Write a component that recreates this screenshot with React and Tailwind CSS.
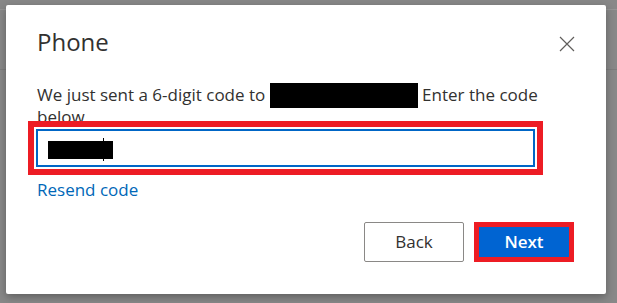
import React from 'react';

const font = { fontFamily: '"Open Sans", "Noto Sans", Arial, sans-serif' };

const CloseIcon = () => (
  <svg width="16" height="16" viewBox="0 0 16 16" className="text-[#605e5c]">
    <path d="M1 1 L15 15 M15 1 L1 15" stroke="currentColor" strokeWidth="1.2" fill="none" />
  </svg>
);

const App = () => {
  return (
    <div className="relative h-[303px] w-[617px] overflow-hidden bg-[#888888]" style={font}>
      {/* page behind the modal */}
      <div className="h-[10px] border-b border-[#959595]" />
      <div className="h-[60px] border-b border-[#7d7d7d]" />

      {/* Dialog */}
      <div className="absolute left-[6px] top-[5px] flex h-[289px] w-[600px] flex-col rounded-[2px] bg-white px-[31px] pt-[21px] shadow-[0_3px_8px_rgba(0,0,0,0.3)]">
        <div className="flex items-start justify-between">
          <h1 className="text-[24px] leading-[32px] text-[#323130]">Phone</h1>
          <button className="mt-[10px] p-0">
            <CloseIcon />
          </button>
        </div>

        <p className="mt-[26px] pr-[20px] text-[17px] leading-[22px] text-[#323130]">
          We just sent a 6-digit code to{' '}
          <span className="-mb-[7px] -mt-[2px] inline-block h-[25px] w-[148px] bg-black align-baseline" />{' '}
          Enter the code below
        </p>

        <div className="relative -mt-[7px] mr-[32px] -ml-[9px] border-[6px] border-[#ed1c24] bg-white p-[2px]">
          <div className="flex h-[38px] items-start border-2 border-[#0066c6] pl-[10px] pt-[10px]">
            <div className="relative h-[18px] w-[65px] bg-black">
              <div className="absolute left-[55px] top-[-3px] h-[23px] w-px bg-black" />
            </div>
          </div>
        </div>

        <a className="mt-[4px] self-start text-[17px] leading-[22px] text-[#0067b8]" href="#">
          Resend code
        </a>

        <div className="mt-[21px] flex justify-end gap-[10px] pr-[1px]">
          <button className="h-[40px] w-[100px] rounded-[2px] border border-[#8a8886] bg-white text-[17px] text-[#323130]">
            Back
          </button>
          <button className="h-[40px] w-[100px] border-[5px] border-[#ed1c24] bg-[#0064d2] text-[17px] font-semibold text-white">
            Next
          </button>
        </div>
      </div>
    </div>
  );
};

export default App;
